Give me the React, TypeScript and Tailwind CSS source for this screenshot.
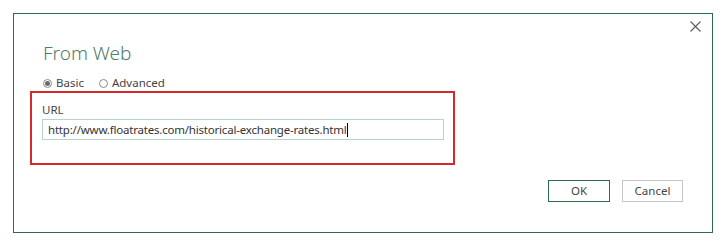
import React from "react";

export default function App() {
  const font = { fontFamily: '"Noto Sans", "Open Sans", sans-serif' };
  return (
    <div className="w-[723px] h-[248px] bg-white pt-[13px] pl-[13px]" style={font}>
      <div className="relative w-[700px] h-[220px] border border-[#2e6b4e] bg-white pl-[16px] pr-[29px] pt-[26px]">
        <button className="absolute right-[10px] top-[5px] w-[14px] h-[14px] flex items-center justify-center">
          <svg width="11" height="11" viewBox="0 0 11 11">
            <path d="M0.5 0.5 L10.5 10.5 M10.5 0.5 L0.5 10.5" stroke="#5a5a5a" strokeWidth="1.1" fill="none" />
          </svg>
        </button>
        <div className="pl-[13px] text-[19px] leading-[27px] font-light text-[#4f7d6c]">From Web</div>
        <div className="pl-[13px] mt-[8px] flex items-center gap-[15px] text-[11.5px] leading-[16px] text-[#444]">
          <label className="flex items-center gap-[4px]">
            <span className="w-[9px] h-[9px] rounded-full border border-[#8a8a8a] flex items-center justify-center">
              <span className="w-[5px] h-[5px] rounded-full bg-[#6a6a6a]" />
            </span>
            Basic
          </label>
          <label className="flex items-center gap-[4px]">
            <span className="w-[9px] h-[9px] rounded-full border border-[#8a8a8a]" />
            Advanced
          </label>
        </div>
        <div className="mt-0 w-[425px] h-[74px] border-2 border-[#d42a2a] pl-[10px] pr-[9px] pt-[9px]">
          <div className="text-[11.5px] leading-[16px] text-[#444]">URL</div>
          <div className="mt-[1px] h-[21px] border border-[#b9d3c8] flex items-center pl-[5px] text-[11.5px] tracking-[-0.2px] text-[#333]">
            <span>http://www.floatrates.com/historical-exchange-rates.html</span>
            <span className="w-px h-[14px] bg-black" />
          </div>
        </div>
        <div className="mt-[15px] flex justify-end gap-[12px]">
          <button className="w-[62px] h-[22px] border border-[#2e6b4e] text-[11.5px] text-[#444] flex items-center justify-center">OK</button>
          <button className="w-[61px] h-[22px] border border-[#c6c6c6] text-[11.5px] text-[#444] flex items-center justify-center">Cancel</button>
        </div>
      </div>
    </div>
  );
}
